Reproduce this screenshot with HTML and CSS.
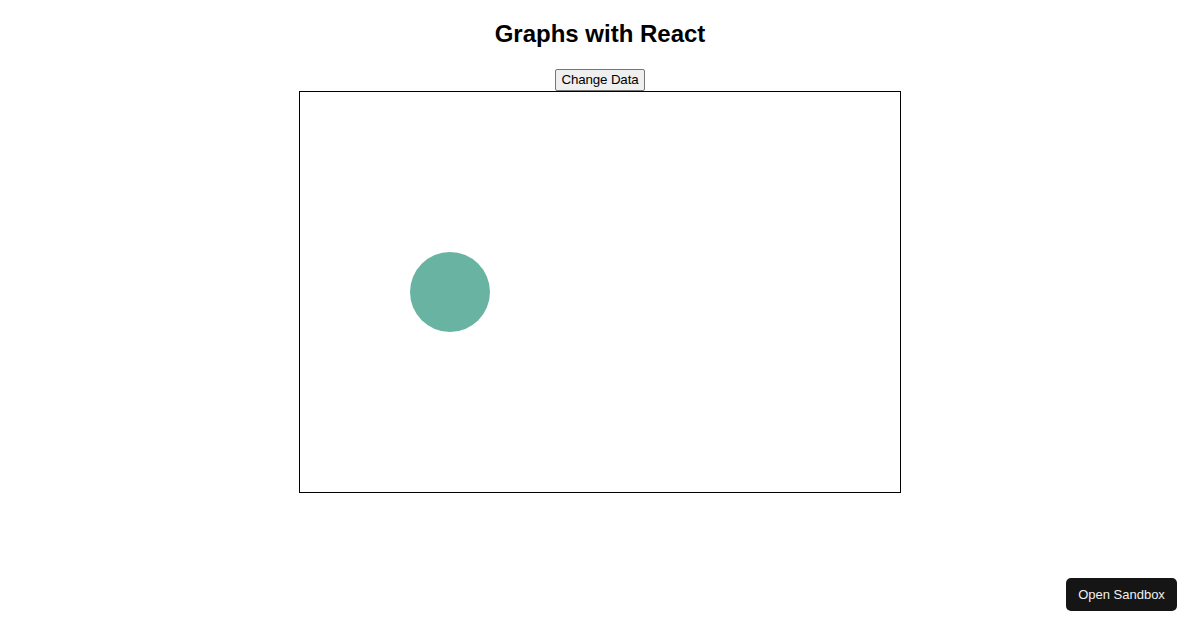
FILE: index.html
```html
<!DOCTYPE html>
<html>
<head>
<meta charset="utf-8">
<link rel="stylesheet" href="styles.css">
</head>
<body>
<div class="app">
  <h2 class="title">Graphs with React</h2>
  <button class="change">Change Data</button>
  <svg class="chart" width="600" height="400" viewBox="0 0 600 400">
    <circle cx="150" cy="200" r="40" fill="#69b3a2"></circle>
  </svg>
</div>
<a class="sandbox">Open Sandbox</a>
</body>
</html>
```
FILE: styles.css
```css
html, body { background: #fff; }
body {
  margin: 8px;
  font-family: "Liberation Sans", Arial, sans-serif;
}
.app {
  display: flex;
  flex-direction: column;
  align-items: center;
}
.title {
  font-size: 24px;
  font-weight: bold;
  margin: 12px 0 21.5px;
  line-height: 27.6px;
  color: #000;
}
.change {
  font-family: "Liberation Sans", Arial, sans-serif;
  font-size: 13.33px;
  letter-spacing: -0.15px;
  height: 22px;
  padding: 1px 6px;
  border: 1px solid #767676;
  border-radius: 2px;
  background: #efefef;
  color: #000;
  line-height: 16px;
}
.chart {
  display: block;
  border: 1px solid #000;
  margin-top: 0;
}
.sandbox {
  position: fixed;
  right: 23px;
  bottom: 19px;
  width: 111px;
  height: 33px;
  box-sizing: border-box;
  display: flex;
  align-items: center;
  justify-content: center;
  background: #151515;
  color: #f0f0f0;
  border-radius: 5px;
  font-size: 13px;
  font-family: "Liberation Sans", Arial, sans-serif;
}
```
